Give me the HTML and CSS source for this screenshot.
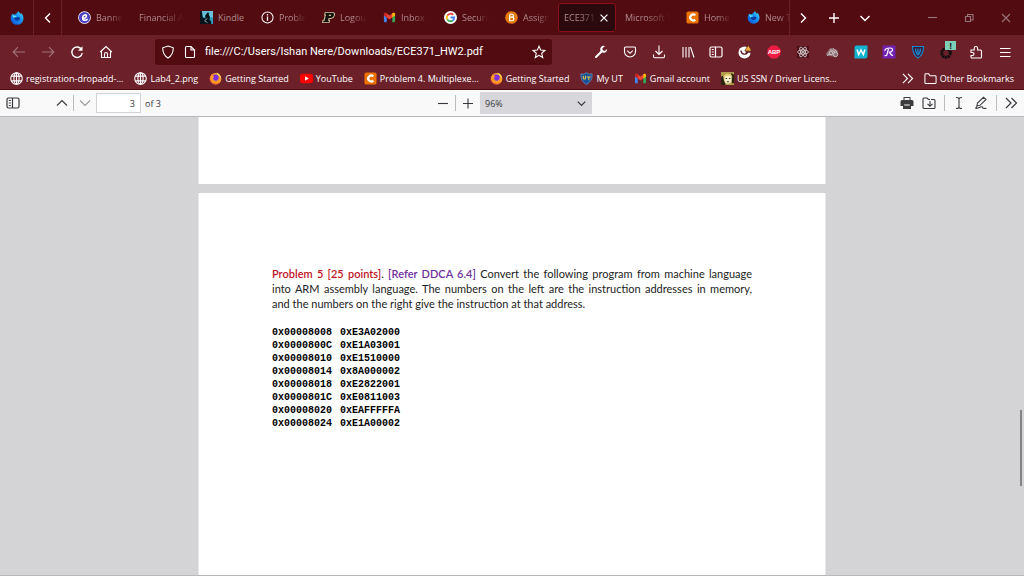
FILE: index.html
```html
<!DOCTYPE html>
<html lang="en">
<head>
  <meta charset="UTF-8" />
  <meta name="viewport" content="width=device-width, initial-scale=1.0"/>
  <title>ECE371_HW2.pdf</title>
  <link rel="stylesheet" href="styles.css">
</head>
<body>
  <!-- Shared shapes, used more than once below -->
  <svg class="defs" aria-hidden="true">
    <defs>
      <linearGradient id="fire" x1="0" y1="1" x2="1" y2="0">
        <stop offset="0" stop-color="#f0284f"/><stop offset=".5" stop-color="#ff7a1f"/><stop offset="1" stop-color="#ffe14a"/>
      </linearGradient>
      <linearGradient id="sea" x1="0" y1="1" x2="1" y2="0">
        <stop offset="0" stop-color="#0a50d8"/><stop offset=".6" stop-color="#1793f5"/><stop offset="1" stop-color="#4fe4f7"/>
      </linearGradient>
    </defs>
    <symbol id="fox-blue" viewBox="0 0 14 14">
      <path fill="url(#sea)" d="M8.300.300c1 .8 1.500 1.500 1.800 2.400.5-.1.800-.4.900-.8 1.700 1.400 2.500 3.400 2.500 5.500A6.400 6.400 0 0 1 .7 7.400C.7 5.300 1.500 3.700 2.700 2.600c0 .5.100.8.300 1.100.6-.3 1.300-.4 2-.3C5.800 3.100 7 2.200 8.300.300z"/>
      <path fill="#0a3a9c" d="M4.200 6.300c.8.500 1.700.5 2.500.2.700-.2 1.100-.7 2-.6 1.200.2 1.600 1.600.9 2.600-.8 1.200-2.600 1.500-3.900.8-1-.6-1.600-1.700-1.500-3z"/>
      <path fill="#5cecff" d="M2.700 2.600c0 .9.500 1.600 1.300 2 .9.400 1.900.2 2.700.6-.7.900-2 .7-2.800 1.500C2.800 6.200 2.100 4.300 2.700 2.600z"/>
    </symbol>
    <symbol id="fox" viewBox="0 0 14 14">
      <circle cx="7" cy="7.500" r="6.300" fill="url(#fire)"/>
      <circle cx="7" cy="6.700" r="4" fill="#7b2fe0"/>
      <path fill="#ff9a26" d="M2.500 2.500c.7 1.200 2 1.400 3.300 1.800-.8 1.200-1.500 1.600-1.300 3 .3 1.700 2 2.400 3.600 2 1.900-.5 2.700-2.400 2-4.500l2.600 1.500-.8 4.200-4 2.300-4.600-1.300L1 7.300z"/>
      <path fill="#ffe14a" d="M8.300.600c3.200 1.300 5 4 4.500 7.200-.4-2.200-1.400-3.300-2.600-4C9.500 3 8.600 2 8.300.600z"/>
    </symbol>
    <symbol id="gmail" viewBox="0 0 14 14">
      <path fill="#4285f4" d="M1 4h3v8H2a1 1 0 0 1-1-1z"/>
      <path fill="#34a853" d="M10 4h3v7a1 1 0 0 1-1 1h-2z"/>
      <path fill="#ea4335" d="M1 3.500C1 2 2.700 1.500 3.800 2.300L7 4.800l3.200-2.500C11.300 1.500 13 2 13 3.500L10 7 7 9.200 4 7z"/>
      <path fill="#c5221f" d="M1 3.500C1 2.500 2 1.700 3 2l1 .5V7L1 4.800z"/>
      <path fill="#fbbc04" d="M13 3.500c0-1-1-1.800-2-1.500l-1 .5V7l3-2.200z"/>
    </symbol>
    <symbol id="chegg" viewBox="0 0 14 14">
      <rect x=".5" y=".5" width="13" height="13" rx="2" fill="#eb7100"/>
      <path fill="none" stroke="#fff" stroke-width="2.400" d="M10 4.700A3.200 3.200 0 1 0 10 9.300"/>
    </symbol>
    <symbol id="globe" viewBox="0 0 14 14">
      <g fill="none" stroke="#fff" stroke-width="1.200">
        <circle cx="7" cy="7" r="6.200"/><ellipse cx="7" cy="7" rx="2.800" ry="6.200"/><path d="M1.500 4.500h11M1.500 9.500h11M7 1v12"/>
      </g>
    </symbol>
    <symbol id="double" viewBox="0 0 14 14">
      <path fill="none" stroke="currentColor" stroke-width="1.200" d="M2 2l5 5-5 5M7.500 2l5 5-5 5"/>
    </symbol>
    <symbol id="panel" viewBox="0 0 14 14">
      <g fill="none" stroke="currentColor" stroke-width="1.200"><rect x="1" y="2" width="12" height="10" rx="1.500"/><path d="M6.500 2v10M2.800 4.500h2M2.800 7h2M2.800 9.500h2"/></g>
    </symbol>
  </svg>

  <div class="tabbar">
    <button class="pinned" aria-label="Firefox"><svg class="icon"><use href="#fox-blue"/></svg></button>
    <button class="scroll" aria-label="Scroll left"><svg class="icon" viewBox="0 0 14 14"><path class="line bold" d="M9 2.500L4.500 7 9 11.500"/></svg></button>
    <div class="tabs">
      <button class="tab"><svg class="fav" viewBox="0 0 14 14"><circle cx="7" cy="7" r="6.800" fill="#fff"/><circle cx="7" cy="7" r="6" fill="#4b3fc4"/><path fill="none" stroke="#fff" stroke-width="1.800" d="M4.500 8c2.500.3 4.800-1 4.600-2.700C8.800 3.500 5.500 3.800 5 7c-.3 3 2.500 4 5.500 1.700"/></svg><span>Banner</span></button>
      <button class="tab"><span>Financial Aid</span></button>
      <button class="tab"><svg class="fav" viewBox="0 0 14 14"><rect width="14" height="14" fill="#2e9cc0"/><rect width="14" height="7" fill="#7fd0e2" opacity=".7"/><path fill="#06131a" d="M0 0h2l1 7 3 1-.5-3L7 3l1-1.500 1.700.5-.2 2 1.500 3-1 1.500 2 3v2.500H0z"/><path stroke="#b6e7f3" stroke-width=".8" d="M8 8l-3 2.500 3 2"/></svg><span class="fits">Kindle</span></button>
      <button class="tab"><svg class="fav" viewBox="0 0 14 14"><circle class="line" cx="7" cy="7" r="6"/><path class="line bold" d="M7 6v4.500M7 3.300v1.500"/></svg><span>Problem</span></button>
      <button class="tab"><svg class="fav" viewBox="0 0 14 14"><path fill="#cfc7a2" d="M3 1h8.500c2.300 0 2.800 1.800 2.300 3.700-.6 2.400-2.200 3.900-4.600 3.900H8l-.3 1h1L8 13H0l.7-3.500h1.100L3 4.800H2.200z"/><path fill="#16130e" d="M3.800 2h7.500c1.500 0 1.800 1.200 1.500 2.500-.5 2-1.700 3-3.600 3H7.200l-.8 3h1.100L7.200 12H1.200l.4-1.500h1.100l1.700-6.700H3.300z"/><path fill="#cfc7a2" d="M7.600 4h2.300L9.500 5.500H7.200z"/></svg><span>Logout</span></button>
      <button class="tab"><svg class="fav"><use href="#gmail"/></svg><span>Inbox (1)</span></button>
      <button class="tab"><svg class="fav" viewBox="0 0 14 14"><circle cx="7" cy="7" r="7" fill="#fff"/><g fill="none" stroke-width="1.900"><path stroke="#ea4335" d="M3.500 5A4.100 4.100 0 0 1 10 4.200"/><path stroke="#fbbc04" d="M3.500 5a4.200 4.200 0 0 0 0 4"/><path stroke="#34a853" d="M3.500 9a4.100 4.100 0 0 0 6 1.200"/><path stroke="#4285f4" d="M7 7h4c0 1.500-.5 2.500-1.500 3.200"/></g></svg><span>Security</span></button>
      <button class="tab"><svg class="fav" viewBox="0 0 14 14"><circle cx="7" cy="7" r="6.800" fill="#e8790c"/><path fill="none" stroke="#fff" stroke-width="1.300" d="M5 3.500h2.500c2.200 0 2.200 3 0 3H5.500M7.500 6.500c2.700 0 2.700 4 0 4H5V4"/></svg><span>Assign</span></button>
      <button class="tab active"><span>ECE371_HW2</span><svg class="close" viewBox="0 0 14 14"><path class="line bold" d="M3 3l8 8M11 3l-8 8"/></svg></button>
      <button class="tab"><span>Microsoft Word</span></button>
      <button class="tab"><svg class="fav"><use href="#chegg"/></svg><span>Home</span></button>
      <button class="tab"><svg class="fav"><use href="#fox-blue"/></svg><span>New Tab</span></button>
    </div>
    <div class="tab-tools">
      <button class="icon-btn" aria-label="Scroll right"><svg class="icon" viewBox="0 0 14 14"><path class="line bold" d="M5 2.500L9.500 7 5 11.500"/></svg></button>
      <button class="icon-btn" aria-label="New tab"><svg class="icon" viewBox="0 0 14 14"><path class="line bold" d="M7 2v10M2 7h10"/></svg></button>
      <button class="icon-btn" aria-label="List all tabs"><svg class="icon" viewBox="0 0 14 14"><path class="line bold" d="M2.500 5L7 9.500 11.500 5"/></svg></button>
    </div>
    <div class="window-controls">
      <button class="icon-btn" aria-label="Minimize"><svg class="icon" viewBox="0 0 14 14"><path class="line" d="M3 6.500h9"/></svg></button>
      <button class="icon-btn" aria-label="Restore"><svg class="icon" viewBox="0 0 14 14"><path class="line" d="M3.500 5.500h5v5h-5zM5.500 5.500v-2h5.500v5.500H8.500"/></svg></button>
      <button class="icon-btn" aria-label="Close"><svg class="icon" viewBox="0 0 14 14"><path class="line" d="M3 3l8 8M11 3l-8 8"/></svg></button>
    </div>
  </div>

  <div class="navbar">
    <div class="nav-buttons">
      <button class="icon-btn dim" aria-label="Back"><svg class="icon" viewBox="0 0 14 14"><path class="line" d="M13 7H1.500M6 2.200L1.200 7 6 11.800"/></svg></button>
      <button class="icon-btn dim" aria-label="Forward"><svg class="icon" viewBox="0 0 14 14"><path class="line" d="M1 7h11.500M8 2.200L12.800 7 8 11.800"/></svg></button>
      <button class="icon-btn" aria-label="Reload"><svg class="icon" viewBox="0 0 14 14"><path class="line bold" d="M11.500 4.500A5.200 5.200 0 1 0 12.200 8"/><path fill="#fff" d="M12.500 1.200v4.500H8z"/></svg></button>
      <button class="icon-btn" aria-label="Home"><svg class="icon" viewBox="0 0 14 14"><path class="line" d="M1.200 7L7 1.500 12.800 7M2.500 6v6.500h9V6M5.500 12.500V9a1.500 1.500 0 0 1 3 0v3.500"/></svg></button>
    </div>
    <div class="urlbar">
      <svg class="icon" viewBox="0 0 14 14"><path class="line" d="M7 1l5.300 1.800c0 5-1.500 8-5.300 10.200C3.200 10.800 1.700 7.800 1.700 2.800z"/></svg>
      <svg class="icon" viewBox="0 0 14 14"><path class="line" d="M3.500 1.500h4.500L11.500 5v6.500a1 1 0 0 1-1 1h-7a1 1 0 0 1-1-1v-9a1 1 0 0 1 1-1zM8 1.500V5h3.500"/></svg>
      <input type="text" aria-label="Address" value="file:///C:/Users/Ishan Nere/Downloads/ECE371_HW2.pdf">
      <button class="icon-btn" aria-label="Bookmark this page"><svg class="icon" viewBox="0 0 14 14"><path class="line" d="M7 1.200l1.700 3.900 4.200.4-3.200 2.800 1 4.200L7 10.300l-3.700 2.200 1-4.200L1.100 5.500l4.200-.4z"/></svg></button>
    </div>
    <div class="extensions">
      <button class="icon-btn" aria-label="Developer tools"><svg class="icon" viewBox="0 0 14 14"><path stroke="#fff" stroke-width="2" stroke-linecap="round" d="M2 12l5.500-5.500"/><path fill="#fff" d="M11 1a3.500 3.500 0 0 0-4.600 4.500C7 7.300 9 8.200 11 7.500c1.500-.6 2.300-2 2-3.500l-2.200 2-2-.8-.5-1.700z"/></svg></button>
      <button class="icon-btn" aria-label="Pocket"><svg class="icon" viewBox="0 0 14 14"><path class="line" d="M2.500 2h9a1 1 0 0 1 1 1v3.500a5.500 5.500 0 0 1-11 0V3a1 1 0 0 1 1-1zM4.200 5.700L7 8.300l2.800-2.600"/></svg></button>
      <button class="icon-btn" aria-label="Downloads"><svg class="icon" viewBox="0 0 14 14"><path class="line" d="M7 .5v8.800M3.500 6L7 9.500 10.500 6M1.500 9.500v2a1.200 1.200 0 0 0 1.200 1.200h8.600a1.200 1.200 0 0 0 1.200-1.200v-2"/></svg></button>
      <button class="icon-btn" aria-label="Library"><svg class="icon" viewBox="0 0 14 14"><path class="line" d="M2 2v10.500M5 2v10.500M8 2v10.500M9.500 2l3.500 10.500"/></svg></button>
      <button class="icon-btn" aria-label="Sidebars"><svg class="icon"><use href="#panel"/></svg></button>
      <button class="icon-btn" aria-label="Grammar checker"><svg class="icon" viewBox="0 0 14 14"><circle cx="6.500" cy="7.500" r="6" fill="#fff"/><path fill="none" stroke="#54121b" stroke-width="1.300" d="M3 5.500C3 9.500 8.500 10.500 9.800 7H7.500M9.800 7h3"/><path fill="#f4b03e" stroke="#3a1210" stroke-width=".6" d="M10.300 0l3.500 6H6.800z"/></svg></button>
      <button class="icon-btn" aria-label="Ad blocker"><svg class="icon" viewBox="0 0 14 14"><path fill="#ec1c43" d="M4.300.5h5.400l3.800 3.800v5.400l-3.800 3.800H4.300L.5 9.700V4.300z"/><text class="abp" x="7" y="9" text-anchor="middle">ABP</text></svg></button>
      <button class="icon-btn" aria-label="React tools"><svg class="icon" viewBox="0 0 14 14"><rect x="1" y="1" width="12" height="12" fill="#4e1018"/><g fill="none" stroke="#ddd" stroke-width=".8"><ellipse cx="7" cy="7" rx="5.500" ry="2.100"/><ellipse cx="7" cy="7" rx="5.500" ry="2.100" transform="rotate(60 7 7)"/><ellipse cx="7" cy="7" rx="5.500" ry="2.100" transform="rotate(120 7 7)"/></g><circle cx="7" cy="7" r="1" fill="#ddd"/></svg></button>
      <button class="icon-btn" aria-label="Cloud"><svg class="icon" viewBox="0 0 14 14"><path fill="#8d7376" d="M2 10.500c-1.500-1-1-3.500 1-4 .5-3 4-4.500 6.500-2.500 2.500 0 4 2.500 3.500 5l-2.500 3z"/><g fill="none" stroke="#d0bfc0" stroke-width="1"><circle cx="6" cy="8" r="1.800"/><circle cx="10.500" cy="9.500" r="2.200"/><path d="M5 4.500l5 2.500M2 10.500l3-1.500M8 3.500L12 7"/></g></svg></button>
      <button class="icon-btn" aria-label="W extension"><svg class="icon" viewBox="0 0 14 14"><path fill="#12b3cf" d="M2.500.5h11V11a2.500 2.500 0 0 1-2.500 2.500H.5V2.500a2 2 0 0 1 2-2z"/><path fill="none" stroke="#fff" stroke-width="1.500" d="M3 4.500L4.700 9.500 7 5l2.300 4.500 1.700-5"/></svg></button>
      <button class="icon-btn" aria-label="R extension"><svg class="icon" viewBox="0 0 14 14"><rect x=".5" y=".5" width="13" height="13" fill="#7421b0"/><path fill="none" stroke="#fff" stroke-width="1.200" d="M3 6c-.5-2 2-3 5-3 4 0 3 4-1 4.300 1.500.3 1.500 3.500 4 3M6.500 4L5 9.500c-.5 1.500-2 1.500-2 .5"/></svg></button>
      <button class="icon-btn" aria-label="Malware shield"><svg class="icon" viewBox="0 0 14 14"><path fill="#3b1630" stroke="#1689cf" stroke-width="1.200" d="M1.500 1.500h11c0 5-1.500 9-5.500 11.500C3 10.500 1.500 6.500 1.500 1.500z"/><path fill="none" stroke="#1689cf" stroke-width="1.300" d="M4.500 3.500c0 3 .8 5 2.500 6.500 1.700-1.500 2.500-3.500 2.500-6.500M7 3.500V8"/></svg></button>
      <button class="icon-btn badged" aria-label="Privacy tool"><svg class="icon" viewBox="0 0 14 14"><circle cx="6" cy="8" r="4.300" fill="none" stroke="#140d0f" stroke-width="3" stroke-dasharray="2.200 .5"/></svg><span class="badge">!</span></button>
      <button class="icon-btn" aria-label="Extensions"><svg class="icon" viewBox="0 0 14 14"><path class="line" d="M2 5h3.200V3.200a1.700 1.700 0 0 1 3.400 0V5h2.900a1 1 0 0 1 1 1v6a1 1 0 0 1-1 1H3a1 1 0 0 1-1-1v-1.500h1.500a1.500 1.500 0 0 0 0-3H2z"/></svg></button>
      <button class="icon-btn" aria-label="Menu"><svg class="icon" viewBox="0 0 14 14"><path class="line" d="M2 3.500h10.500M2 7.500h10.500M2 11.500h10.500"/></svg></button>
    </div>
  </div>

  <div class="bookmarks">
    <a href="#"><svg class="fav"><use href="#globe"/></svg>registration-dropadd-...</a>
    <a href="#"><svg class="fav"><use href="#globe"/></svg>Lab4_2.png</a>
    <a href="#"><svg class="fav"><use href="#fox"/></svg>Getting Started</a>
    <a href="#"><svg class="fav" viewBox="0 0 14 14"><rect y="2" width="14" height="10" rx="2.500" fill="#f00"/><path fill="#fff" d="M5.500 4.700L9.500 7l-4 2.300z"/></svg>YouTube</a>
    <a href="#"><svg class="fav"><use href="#chegg"/></svg>Problem 4. Multiplexe...</a>
    <a href="#"><svg class="fav"><use href="#fox"/></svg>Getting Started</a>
    <a href="#"><svg class="fav" viewBox="0 0 14 14"><path fill="#17519c" stroke="#6d93bb" stroke-width=".8" d="M1 2l3 .3L7 .8l3 1.500 3-.3c.3 5.500-1.500 9-6 11.400C2.500 11 .7 7.500 1 2z"/><path fill="none" stroke="#f2cb3c" stroke-width="1.100" d="M3.500 4v2.500c0 1.500 2.500 1.500 2.500 0V4M7.500 5.500h4M9.500 5.500V9"/></svg>My UT</a>
    <a href="#"><svg class="fav"><use href="#gmail"/></svg>Gmail account</a>
    <a href="#"><svg class="fav" viewBox="0 0 14 14"><rect width="14" height="14" fill="#b09a4c"/><path fill="#29220f" d="M0 5l2-1 1 5 2 5H0zM11 1l3 2v9h-2l-.5-5z"/><ellipse cx="7.500" cy="7.500" rx="4" ry="5.200" fill="#f6edc8"/><path fill="#e5cf72" d="M2.500 6c0-5 9-6 10 0-3-3-7-2.500-10 0z"/><path stroke="#2b2410" d="M5 7h1.500M8.500 7H10M6.500 10.500h2"/></svg>US SSN / Driver Licens...</a>
    <div class="bookmarks-end">
      <button class="icon-btn" aria-label="More bookmarks"><svg class="fav"><use href="#double"/></svg></button>
      <a href="#"><svg class="fav" viewBox="0 0 14 14"><path class="line" d="M1 3a1 1 0 0 1 1-1h3l1.500 2H12a1 1 0 0 1 1 1v6.500a1 1 0 0 1-1 1H2a1 1 0 0 1-1-1z"/></svg>Other Bookmarks</a>
    </div>
  </div>

  <div class="pdf-toolbar">
    <div class="group">
      <button class="icon-btn sidebar-toggle" aria-label="Toggle sidebar"><svg class="icon"><use href="#panel"/></svg></button>
      <button class="icon-btn" aria-label="Previous page"><svg class="icon" viewBox="0 0 14 14"><path class="line" d="M2 9.500L7 4.500l5 5"/></svg></button>
      <i class="sep"></i>
      <button class="icon-btn faded" aria-label="Next page"><svg class="icon" viewBox="0 0 14 14"><path class="line" d="M2 4.500l5 5 5-5"/></svg></button>
      <input class="page-number" id="page" type="text" value="3">
      <label for="page">of 3</label>
    </div>
    <div class="group center">
      <button class="icon-btn" aria-label="Zoom out"><svg class="icon" viewBox="0 0 14 14"><path class="line" d="M2 7.500h10"/></svg></button>
      <i class="sep"></i>
      <button class="icon-btn" aria-label="Zoom in"><svg class="icon" viewBox="0 0 14 14"><path class="line" d="M2 7.500h10M7 2.500v10"/></svg></button>
      <div class="zoom">
        <select aria-label="Zoom"><option>96%</option></select>
        <svg class="fav" viewBox="0 0 14 14"><path class="line bold" d="M3 5l4 4 4-4"/></svg>
      </div>
    </div>
    <div class="group right">
      <button class="icon-btn" aria-label="Print"><svg class="icon" viewBox="0 0 14 14"><path fill="#3c3c3f" d="M3.500 1h7v3H12a1.500 1.500 0 0 1 1.500 1.500V10H11v3H3v-3H.5V5.500A1.500 1.500 0 0 1 2 4h1.500z"/><path fill="#f9f9fa" d="M4.500 2h5v2h-5zM4.200 8.500h5.600v1H4.200z"/></svg></button>
      <button class="icon-btn" aria-label="Save"><svg class="icon" viewBox="0 0 14 14"><path class="line" d="M6 12.500H2a1 1 0 0 1-1-1V3a1 1 0 0 1 1-1h3l1.500 1.500H8M9 3.500h3a1 1 0 0 1 1 1v7a1 1 0 0 1-1 1H5M8 5v5M5.500 7.800L8 10.300l2.500-2.500"/></svg></button>
      <i class="sep"></i>
      <button class="icon-btn" aria-label="Add text"><svg class="icon" viewBox="0 0 14 14"><path class="line" d="M4 1.500c1.500 0 3 .3 3 1.500 0-1.200 1.500-1.500 3-1.500M7 3v8M4 12.500c1.500 0 3-.3 3-1.500 0 1.200 1.500 1.500 3 1.500"/></svg></button>
      <button class="icon-btn" aria-label="Draw"><svg class="icon" viewBox="0 0 14 14"><path class="line" d="M3 9.500l.5-2.500L9.500 1.300l2.500 2.200L6 9.300zM1.500 12.500l2-3M1.500 12.500c3 .3 5-2.500 7-1.500 0 1.500.5 1.500 4 1.500"/></svg></button>
      <i class="sep"></i>
      <button class="icon-btn" aria-label="More tools"><svg class="icon"><use href="#double"/></svg></button>
    </div>
  </div>

  <main class="viewer">
    <section class="page previous"></section>
    <section class="page">
      <p><b class="problem">Problem 5 [25 points]</b>. <b class="refer">[Refer DDCA 6.4]</b> Convert the following program from machine language into ARM assembly language. The numbers on the left are the instruction addresses in memory, and&nbsp;the numbers on the right give the instruction at that address.</p>
      <table>
        <tr><td>0x00008008</td><td>0xE3A02000</td></tr>
        <tr><td>0x0000800C</td><td>0xE1A03001</td></tr>
        <tr><td>0x00008010</td><td>0xE1510000</td></tr>
        <tr><td>0x00008014</td><td>0x8A000002</td></tr>
        <tr><td>0x00008018</td><td>0xE2822001</td></tr>
        <tr><td>0x0000801C</td><td>0xE0811003</td></tr>
        <tr><td>0x00008020</td><td>0xEAFFFFFA</td></tr>
        <tr><td>0x00008024</td><td>0xE1A00002</td></tr>
      </table>
    </section>
    <div class="scroll-thumb"></div>
  </main>
</body>
</html>
```
FILE: styles.css
```css
* {
  box-sizing: border-box;
}

body {
  margin: 0;
  height: 100vh;
  display: flex;
  flex-direction: column;
  overflow: hidden;
  font-family: "Open Sans", "Noto Sans", sans-serif;
  font-size: 9px;
  color: #fff;
  background: #6c202a;
}

button {
  border: none;
  padding: 0;
  background: none;
  color: inherit;
  font: inherit;
  display: flex;
  align-items: center;
}

input, select {
  font: inherit;
  color: inherit;
  border: none;
  outline: none;
}

a {
  color: inherit;
  text-decoration: none;
}

.defs {
  position: absolute;
  width: 0;
  height: 0;
}

.icon {
  width: 14px;
  height: 14px;
  flex: none;
}

.fav {
  width: 13px;
  height: 13px;
  flex: none;
}

.icon-btn {
  flex: none;
}

.line {
  fill: none;
  stroke: currentColor;
  stroke-width: 1.1;
}

.bold {
  stroke-width: 1.4;
}

/* Tab strip */
.tabbar {
  flex: none;
  height: 35px;
  display: flex;
  background: #520b11;
}

.pinned {
  width: 34px;
  justify-content: center;
  border-right: 1px solid #6c202a;
}

.scroll {
  width: 28px;
  justify-content: center;
  border-right: 1px solid #6c202a;
}

.tabs {
  flex: 1;
  min-width: 0;
  display: flex;
  align-items: center;
  padding-left: 8px;
  overflow: hidden;
  border-right: 1px solid #6c202a;
}

.tab {
  flex: none;
  width: 61px;
  height: 29px;
  padding: 0 8px;
  gap: 5px;
  color: #b08a8e;
}

.tab .fav {
  color: #fff;
}

.tab span {
  flex: 1;
  text-align: left;
  white-space: nowrap;
  overflow: hidden;
  mask-image: linear-gradient(to right, #000 50%, transparent);
}

.tab .fits {
  overflow: visible;
  mask-image: none;
}

.tab.active {
  width: 58px;
  margin-right: 1px;
  padding: 0 5px;
  gap: 0;
  background: #2b0a0e;
  border: 1px solid #8c0f1b;
  border-radius: 3px;
}

.close {
  width: 12px;
  height: 12px;
  flex: none;
  color: #fff;
}

.tab-tools {
  display: flex;
  align-items: center;
  gap: 17px;
  padding: 0 53px 0 6px;
}

.window-controls {
  display: flex;
  align-items: center;
  gap: 23px;
  padding-right: 11px;
  color: #98757a;
}

/* Address row */
.navbar {
  flex: none;
  height: 33px;
  display: flex;
  align-items: center;
  gap: 42px;
  padding: 0 12px;
}

.nav-buttons {
  display: flex;
  gap: 15px;
}

.dim {
  color: #a4747a;
}

.urlbar {
  flex: 1;
  min-width: 0;
  height: 26px;
  display: flex;
  align-items: center;
  gap: 8px;
  padding: 0 6px;
  background: #520b11;
  border-radius: 3px;
}

.urlbar input {
  flex: 1;
  min-width: 0;
  padding: 0;
  background: none;
  font-family: Roboto, sans-serif;
  font-size: 11px;
}

.extensions {
  flex: 0 0 418px;
  display: flex;
  justify-content: space-between;
}

.abp {
  font: bold 6px "Liberation Sans", sans-serif;
  fill: #fff;
}

.badged {
  position: relative;
}

.badge {
  position: absolute;
  left: 5px;
  top: -4px;
  width: 11px;
  height: 9px;
  background: #7fcfb8;
  color: #111;
  font-size: 8px;
  font-weight: bold;
  line-height: 9px;
  text-align: center;
}

/* Bookmarks */
.bookmarks {
  flex: none;
  height: 22px;
  display: flex;
  align-items: center;
  gap: 11px;
  padding: 0 10px;
  white-space: nowrap;
  border-bottom: 1px solid #520b11;
}

.bookmarks a {
  display: flex;
  align-items: center;
  gap: 3px;
}

.bookmarks-end {
  margin-left: auto;
  display: flex;
  align-items: center;
  gap: 10px;
}

/* PDF toolbar */
.pdf-toolbar {
  flex: none;
  height: 27px;
  display: grid;
  grid-template-columns: 1fr auto 1fr;
  align-items: center;
  padding: 0 6px;
  color: #38383d;
  background: #f9f9fa;
  border-bottom: 1px solid #b8b8ba;
}

.group {
  display: flex;
  align-items: center;
  gap: 4px;
}

.center {
  gap: 5px;
  padding-left: 4px;
}

.sidebar-toggle {
  margin-right: 31px;
}

.faded {
  color: #9a9a9e;
}

.sep {
  width: 1px;
  height: 16px;
  background: #bdbdc0;
}

.page-number {
  width: 45px;
  height: 20px;
  padding: 0 5px;
  text-align: right;
  background: #fff;
  border: 1px solid #d2d2d5;
}

.zoom {
  position: relative;
}

.zoom select {
  display: block;
  appearance: none;
  width: 112px;
  height: 22px;
  padding: 0 5px;
  background: #d7d7db;
}

.zoom .fav {
  position: absolute;
  right: 4px;
  top: 5px;
  pointer-events: none;
}

.right {
  justify-content: flex-end;
  gap: 8px;
}

.right .sep {
  margin-right: -1px;
}

/* Document */
.viewer {
  position: relative;
  flex: 1;
  min-height: 0;
  display: flex;
  flex-direction: column;
  align-items: center;
  gap: 9px;
  overflow: hidden;
  background: #d4d4d7;
  border-bottom: 1px solid #b8b8ba;
}

.page {
  flex: 1 0 auto;
  width: 100%;
  max-width: 628px;
  padding: 73px;
  background: #fff;
  border: 0 solid #e6e6e8;
  border-width: 0 1px;
  color: #222;
}

.previous {
  flex: none;
  height: 67px;
  padding: 0;
}

.page p {
  margin: 0 0 15px;
  font-family: Lato, sans-serif;
  font-size: 11px;
  line-height: 15px;
  text-align: justify;
}

.page b {
  font-weight: 600;
}

.problem {
  color: #c0141f;
}

.refer {
  color: #7030a0;
}

.page table {
  border-collapse: collapse;
  font: bold 10px "Liberation Mono", monospace;
  line-height: 13px;
  color: #000;
}

.page td {
  padding: 0 8px 0 0;
}

.scroll-thumb {
  position: absolute;
  right: 2px;
  top: 293px;
  width: 2px;
  height: 76px;
  background: #858587;
}
```
